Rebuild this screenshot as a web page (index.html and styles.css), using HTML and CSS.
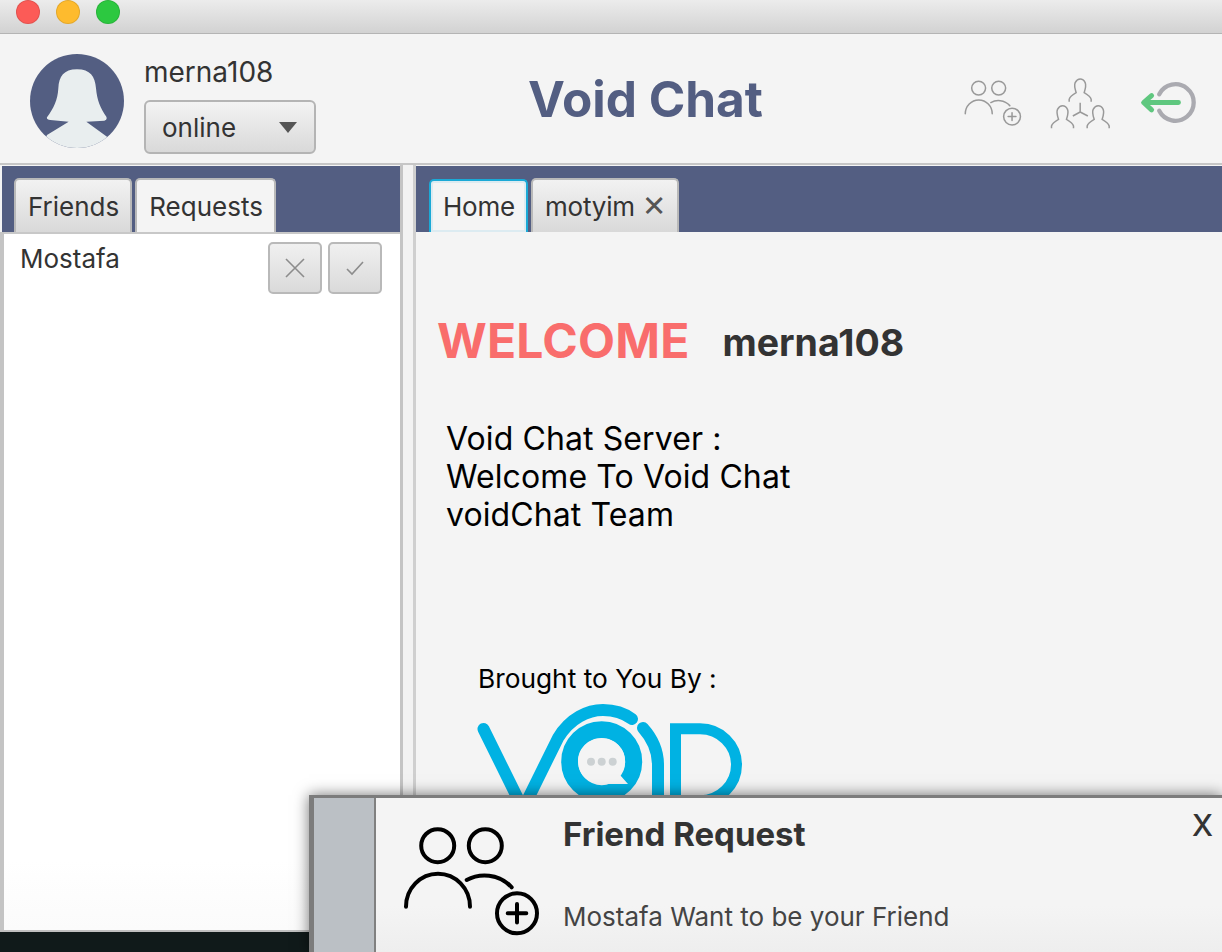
FILE: index.html
```html
<!DOCTYPE html>
<html lang="en">
<head>
    <meta charset="UTF-8">
    <meta name="viewport" content="width=device-width, initial-scale=1.0">
    <title>Void Chat</title>
    <link rel="stylesheet" href="styles.css">
</head>
<body>
    <svg class="defs" aria-hidden="true">
        <symbol id="add-friend" viewBox="0 0 140 124">
            <circle cx="34.7" cy="20.7" r="16.5"/>
            <circle cx="82.3" cy="20.7" r="16.5"/>
            <path d="M3 81.7 A32 33 0 0 1 67 81.7" stroke-linecap="round"/>
            <path d="M63.7 55 C76 48 96 48 108.7 62.3" stroke-linecap="round"/>
            <circle cx="114" cy="88.3" r="20"/>
            <path d="M114 79 V97.600 M104.700 88.300 H123.300" stroke-linecap="round"/>
        </symbol>
    </svg>

    <div class="window">
        <div class="titlebar">
            <span class="light red"></span>
            <span class="light yellow"></span>
            <span class="light green"></span>
        </div>

        <header class="header">
            <svg class="avatar" viewBox="89 162 282 282">
                <clipPath id="avatar-clip"><circle cx="230" cy="303" r="141"/></clipPath>
                <circle cx="230" cy="303" r="141" fill="#535e82"/>
                <path clip-path="url(#avatar-clip)" fill="#e9eeef" d="M230 208 C190 208 176 230 174 265 C172 300 160 325 140 352 Q138 358 150 360 L205 365 L140 405 L120 450 H340 L320 410 L258 365 L312 362 Q322 360 318 350 C300 325 290 300 287 265 C284 230 270 208 230 208 Z"/>
            </svg>
            <div class="user">
                <div class="user-name">merna108</div>
                <div class="combo">
                    <span>online</span>
                    <span class="combo-arrow"></span>
                </div>
            </div>
            <h1 class="app-title">Void Chat</h1>
            <div class="header-icons">
                <svg class="icon-add"><use href="#add-friend"/></svg>
                <svg class="icon-group" viewBox="330 75 185 165">
                    <g id="person">
                        <path d="M390 152 V145 Q392 136 411 125 Q404 104 408 95 Q414 84 423 84 Q433 84 438 95 Q442 104 435 125 Q454 136 456 145 V152"/>
                    </g>
                    <use href="#person" x="-53" y="80"/>
                    <use href="#person" x="54" y="80"/>
                    <path d="M423 155 V183 M423 183 L401 195 M423 183 L446 195"/>
                </svg>
                <svg class="icon-logout" viewBox="590 85 190 140">
                    <path d="M657 130 A55 55 0 1 1 657 180" fill="none" stroke="#aaaab0" stroke-width="13" stroke-linecap="round"/>
                    <path d="M612 155 H715 M634 134 L610 155 L634 177" fill="none" stroke="#5fc77f" stroke-width="15" stroke-linecap="round" stroke-linejoin="round"/>
                </svg>
            </div>
        </header>

        <div class="split">
            <aside class="side">
                <div class="tab-bar side-tabs">
                    <div class="tab">Friends</div>
                    <div class="tab tab-selected">Requests</div>
                </div>
                <div class="request-list">
                    <div class="request">
                        <span class="request-name">Mostafa</span>
                        <div class="request-actions">
                            <button class="action-btn">
                                <svg viewBox="0 0 20 20"><path d="M1 1 L19 19 M19 1 L1 19"/></svg>
                            </button>
                            <button class="action-btn">
                                <svg viewBox="0 0 20 20"><path d="M2 11 L7 16 L18 4"/></svg>
                            </button>
                        </div>
                    </div>
                </div>
            </aside>
            <div class="divider"></div>
            <main class="main">
                <div class="tab-bar main-tabs">
                    <div class="tab tab-focused">Home</div>
                    <div class="tab">motyim <span class="tab-close">✕</span></div>
                </div>
                <div class="home">
                    <div class="welcome">
                        <span class="welcome-word">WELCOME</span>
                        <span class="welcome-name">merna108</span>
                    </div>
                    <div class="server-msg">
                        <div>Void Chat Server :</div>
                        <div>Welcome To Void Chat</div>
                        <div>voidChat Team</div>
                    </div>
                    <div class="brought">Brought to You By :</div>
                    <svg class="void-logo" viewBox="470 700 280 110">
                        <g fill="none" stroke="#00b2e3" stroke-width="12" stroke-linecap="round">
                            <path d="M483.500 728 L523 808"/>
                            <path d="M523 808 L558 737 C570 717 588 709 603 709 C614 709 624 712 632 718"/>
                            <circle cx="601.700" cy="760.700" r="32" stroke-width="17"/>
                            <path d="M643 727 C652 737 658 750 658 764 V810" stroke-linecap="round"/>
                            <path d="M675.500 810 V727.800 H700 A36.500 36 0 0 1 700 799.800 H675.500" stroke-width="11" stroke-linecap="butt"/>
                        </g>
                        <path fill="#f4f4f4" d="M601.700 737 C615 737 625 748 625 760 C625 766 623 770 620 774 L628 783 H602 C588 783 578 773 578 760 C578 748 588 737 601.700 737 Z"/>
                        <circle cx="591" cy="760.700" r="4" fill="#ccd1d3"/>
                        <circle cx="601.700" cy="760.700" r="4" fill="#ccd1d3"/>
                        <circle cx="612.700" cy="760.700" r="4" fill="#ccd1d3"/>
                    </svg>
                </div>
            </main>
        </div>
    </div>

    <div class="popup">
        <div class="popup-stripe"></div>
        <div class="popup-body">
            <svg class="popup-icon"><use href="#add-friend"/></svg>
            <div class="popup-text">
                <div class="popup-title">Friend Request</div>
                <div class="popup-msg">Mostafa Want to be your Friend</div>
            </div>
            <div class="popup-close">X</div>
        </div>
    </div>
</body>
</html>
```

FILE: styles.css
```css
html, body {
    margin: 0;
    padding: 0;
    height: 952px;
    overflow: hidden;
}

body {
    font-family: 'Inter', 'Liberation Sans', sans-serif;
    color: #333;
    background-color: #101a1a;
    position: relative;
}

.defs {
    display: none;
}

.window {
    height: 932px;
    display: flex;
    flex-direction: column;
    background-color: #f4f4f4;
}

/* title bar */
.titlebar {
    height: 33px;
    flex: none;
    display: flex;
    gap: 16px;
    padding-left: 16px;
    background: linear-gradient(#ececec, #d2d2d2);
    border-bottom: 1px solid #b4b4b4;
}

.light {
    width: 24px;
    height: 24px;
    border-radius: 50%;
    box-sizing: border-box;
    border: 1px solid rgba(0, 0, 0, 0.1);
}

.red { background-color: #fc5b57; }
.yellow { background-color: #febb2e; }
.green { background-color: #2cc840; }

/* header */
.header {
    height: 131px;
    flex: none;
    display: flex;
    align-items: flex-start;
    padding-left: 30px;
    background-color: #f4f4f4;
    border-bottom: 2px solid #c6c6c6;
    box-sizing: border-box;
}

.avatar {
    width: 94px;
    height: 94px;
    margin-top: 20px;
    flex: none;
}

.user {
    margin-left: 20px;
    width: 172px;
    flex: none;
}

.user-name {
    font-size: 28px;
    line-height: 32px;
    margin-top: 22px;
}

.combo {
    margin-top: 12px;
    height: 54px;
    box-sizing: border-box;
    display: flex;
    align-items: center;
    justify-content: space-between;
    padding: 0 17px 0 16px;
    font-size: 26px;
    border: 2px solid #b4b4b4;
    border-radius: 6px;
    background: linear-gradient(#f3f3f3, #d9d9d9);
}

.combo-arrow {
    width: 0;
    height: 0;
    border-left: 9px solid transparent;
    border-right: 9px solid transparent;
    border-top: 11px solid #555;
}

.app-title {
    margin: 35px 0 0 212px;
    font-size: 49.5px;
    line-height: 60px;
    font-weight: 700;
    color: #535e82;
    width: 236px;
    white-space: nowrap;
    flex: none;
}

.header-icons {
    margin-left: 200px;
    margin-top: 42px;
    display: flex;
    align-items: flex-start;
}

.header-icons svg {
    flex: none;
    fill: none;
    stroke: #999;
}

.icon-add {
    width: 59px;
    height: 53px;
    stroke-width: 3.6;
    margin-top: 3px;
}

.icon-group {
    width: 62px;
    height: 55px;
    margin-left: 26px;
    stroke-width: 4.5;
}

.icon-logout {
    width: 63px;
    height: 47px;
    margin-left: 26px;
    margin-top: 3px;
}

/* split pane */
.split {
    flex: 1;
    display: flex;
    min-height: 0;
    border-bottom: 2px solid #c0c0c0;
}

.side {
    width: 398px;
    flex: none;
    display: flex;
    flex-direction: column;
    padding-left: 2px;
}

.divider {
    width: 16px;
    flex: none;
    background-color: #f2f2f2;
    border-left: 3px solid #c4c4c4;
    border-right: 3px solid #cfcfcf;
    box-sizing: border-box;
}

.main {
    flex: 1;
    min-width: 0;
    display: flex;
    flex-direction: column;
    overflow: hidden;
}

/* tabs */
.tab-bar {
    height: 66px;
    flex: none;
    box-sizing: border-box;
    background-color: #535e82;
    display: flex;
    align-items: flex-end;
    gap: 3px;
    margin-top: 1px;
}

.side-tabs {
    padding-left: 12px;
}

.main-tabs {
    padding-left: 13px;
    letter-spacing: -0.2px;
}

.tab {
    height: 54px;
    box-sizing: border-box;
    padding: 0 11px 0 12px;
    display: flex;
    align-items: center;
    font-size: 26px;
    white-space: nowrap;
    border: 2px solid #b9b9b9;
    border-bottom: none;
    border-radius: 5px 5px 0 0;
    background: linear-gradient(#f2f2f2, #d9d9d9);
}

.tab-selected {
    background: #f4f4f4;
}

.tab-focused {
    background: #f4f4f4;
    height: 53px;
    border-color: #1ba9d6;
    box-shadow: inset 0 0 0 2px #dcebf1;
}

.tab-close {
    margin-left: 7px;
    font-size: 29px;
    color: #555;
    font-family: 'DejaVu Sans', sans-serif;
}

/* requests list */
.request-list {
    flex: 1;
    background: linear-gradient(#fff 90%, #fbfbfb);
    margin-left: 2px;
    border-top: 2px solid #c8c8c8;
    padding: 8px 18px 0 16px;
    box-shadow: -4px 0 0 #c4c4c4;
}

.request {
    display: flex;
    justify-content: space-between;
    align-items: flex-start;
}

.request-name {
    font-size: 26px;
    line-height: 34px;
}

.request-actions {
    display: flex;
    gap: 6px;
}

.action-btn {
    width: 54px;
    height: 52px;
    padding: 0;
    display: flex;
    align-items: center;
    justify-content: center;
    border: 2px solid #b9b9b9;
    border-radius: 5px;
    background: linear-gradient(#f0f0f0, #dadada);
}

.action-btn svg {
    width: 20px;
    height: 20px;
    fill: none;
    stroke: #8c8c8c;
    stroke-width: 1.6;
}

/* home tab */
.home {
    flex: 1;
    background-color: #f4f4f4;
    padding-left: 21px;
}

.welcome {
    display: flex;
    align-items: flex-start;
    margin-top: 80px;
    height: 58px;
}

.welcome-word {
    font-size: 48px;
    line-height: 58px;
    font-weight: 700;
    letter-spacing: 0.2px;
    color: #f96d6c;
}

.welcome-name {
    font-size: 37.5px;
    line-height: 58px;
    font-weight: 700;
    margin: 2px 0 0 33px;
    color: #333;
}

.server-msg {
    margin: 50px 0 0 9px;
    font-size: 32px;
    line-height: 38px;
    letter-spacing: 0.1px;
    color: #000;
}

.brought {
    margin: 128px 0 0 41px;
    font-size: 26.3px;
    line-height: 34px;
    color: #000;
}

.void-logo {
    display: block;
    width: 280px;
    height: 110px;
    margin: 5px 0 0 33px;
}

/* notification popup */
.popup {
    position: absolute;
    left: 309px;
    top: 795px;
    width: 913px;
    height: 157px;
    box-sizing: border-box;
    display: flex;
    background-color: #f4f4f4;
    border-top: 3px solid #7c7c7c;
    border-left: 5px solid #7c7c7c;
    box-shadow: 0 0 14px rgba(0, 0, 0, 0.55);
}

.popup-stripe {
    width: 60px;
    flex: none;
    background-color: #bbc0c5;
    border-right: 2px solid #808080;
}

.popup-body {
    flex: 1;
    display: flex;
    align-items: flex-start;
    background: linear-gradient(#f4f4f4 70%, #eeeeee);
    position: relative;
}

.popup-icon {
    width: 140px;
    height: 124px;
    flex: none;
    margin: 27px 0 0 27px;
    fill: none;
    stroke: #000;
    stroke-width: 4;
}

.popup-text {
    margin-left: 20px;
}

.popup-title {
    margin-top: 17px;
    font-size: 33px;
    line-height: 38px;
    font-weight: 700;
}

.popup-msg {
    margin-top: 47px;
    font-size: 26px;
    line-height: 34px;
    color: #444;
}

.popup-close {
    position: absolute;
    top: 8px;
    right: 9px;
    font-size: 30px;
    line-height: 38px;
    font-weight: 500;
}
```
